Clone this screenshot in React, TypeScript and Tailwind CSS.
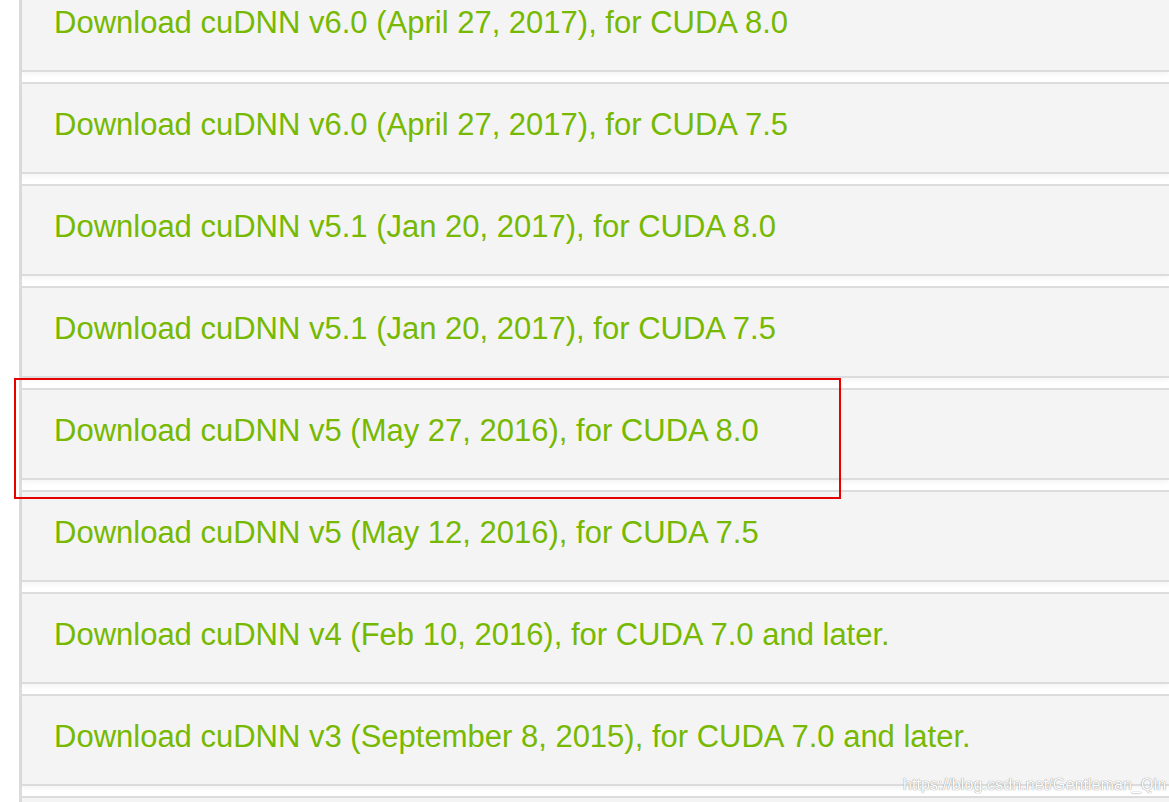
import React from 'react';

const downloads: string[] = [
  'Download cuDNN v6.0 (April 27, 2017), for CUDA 8.0',
  'Download cuDNN v6.0 (April 27, 2017), for CUDA 7.5',
  'Download cuDNN v5.1 (Jan 20, 2017), for CUDA 8.0',
  'Download cuDNN v5.1 (Jan 20, 2017), for CUDA 7.5',
  'Download cuDNN v5 (May 27, 2016), for CUDA 8.0',
  'Download cuDNN v5 (May 12, 2016), for CUDA 7.5',
  'Download cuDNN v4 (Feb 10, 2016), for CUDA 7.0 and later.',
  'Download cuDNN v3 (September 8, 2015), for CUDA 7.0 and later.',
  '',
];

const DownloadRow: React.FC<{ label: string; marked?: boolean }> = ({ label, marked }) => (
  <div className="relative mb-[10px] border-y-2 border-[#dcdcdc] bg-[#f4f4f4] shadow-[0_3px_5px_rgba(0,0,0,0.04)]">
    <div className="h-[88px] pl-[32px] pt-[25px] leading-[32px] text-[31px] text-[#76b900] whitespace-nowrap">
      {label}
    </div>
    {marked && (
      <div className="absolute left-[-8px] top-[-12px] z-10 h-[121px] w-[827px] border-2 border-[#e60000]" />
    )}
  </div>
);

export default function App() {
  return (
    <div
      className="relative h-[802px] w-[1169px] overflow-hidden bg-white"
      style={{ fontFamily: '"Liberation Sans", Arial, sans-serif' }}
    >
      <div className="ml-[19px] mt-[-20px] border-l-[3px] border-[#dcdcdc]">
        {downloads.map((d, i) => (
          <DownloadRow key={i} label={d} marked={i === 4} />
        ))}
      </div>
      <div className="absolute left-[903px] top-[773px] z-20 text-[16px] tracking-[0.1px] text-white [text-shadow:0_0_1px_#9a9a9a,0_0_1px_#9a9a9a]">
        https://blog.csdn.net/Gentleman_Qin
      </div>
    </div>
  );
}
